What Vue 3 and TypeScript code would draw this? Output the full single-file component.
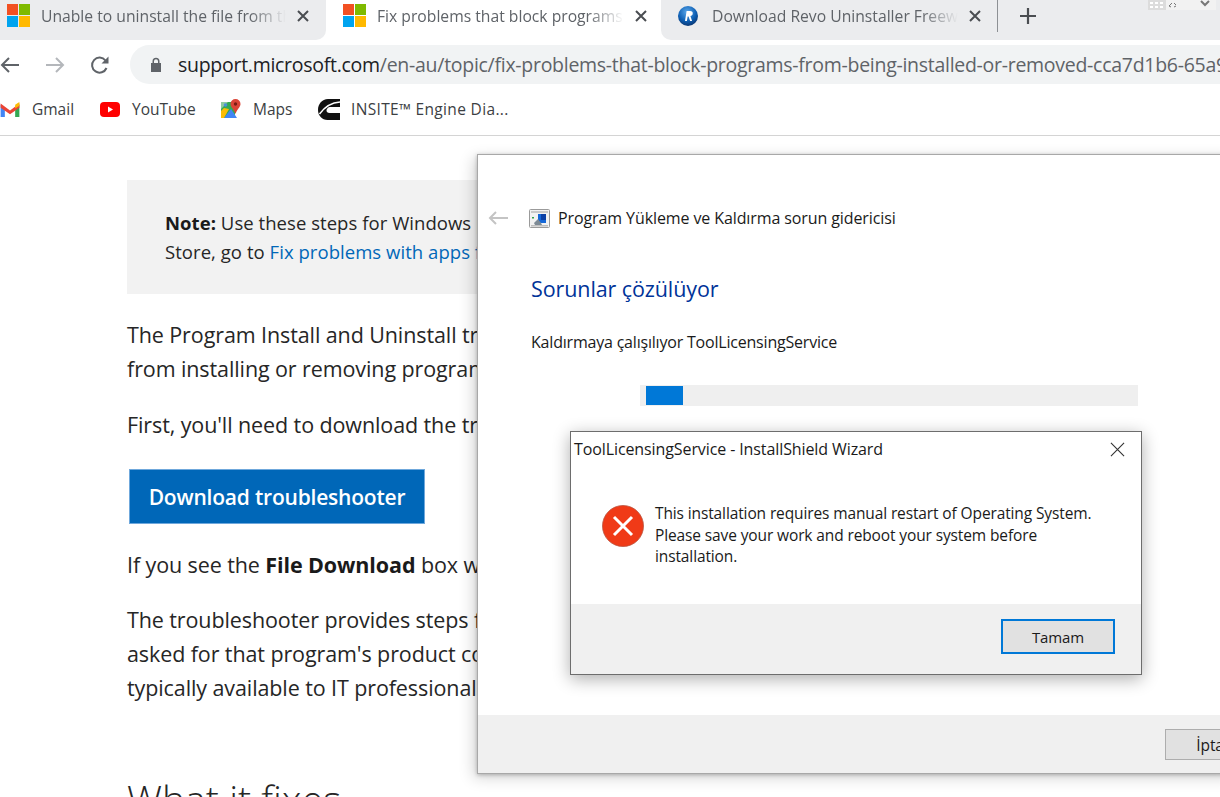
<script setup lang="ts">
const msColors: string[] = ['#f25022', '#7fba00', '#00a4ef', '#ffb900']
</script>

<template>
  <div class="screen">
    <header class="tabs">
      <div class="tab tab-first">
        <span class="ms"><i v-for="c in msColors" :key="c" :style="{ background: c }"></i></span>
        <span class="tab-title t1">Unable to uninstall the file from the</span>
        <svg class="x" viewBox="0 0 12 12"><path d="M1 1l10 10M11 1L1 11" /></svg>
      </div>
      <div class="tab tab-active">
        <span class="ms"><i v-for="c in msColors" :key="c" :style="{ background: c }"></i></span>
        <span class="tab-title t2">Fix problems that block programs from</span>
        <svg class="x" viewBox="0 0 12 12"><path d="M1 1l10 10M11 1L1 11" /></svg>
      </div>
      <div class="tab tab-last">
        <svg class="revo" viewBox="0 0 20 20">
          <defs>
            <radialGradient id="rv" cx="45%" cy="30%" r="75%">
              <stop offset="0" stop-color="#5aa7ea" />
              <stop offset="0.6" stop-color="#0d5fb4" />
              <stop offset="1" stop-color="#0a2f66" />
            </radialGradient>
          </defs>
          <circle cx="10" cy="10" r="10" fill="url(#rv)" />
          <path d="M7 15l1.6-10h3.4c2 0 3 1 2.7 2.7-.2 1.300-1 2.100-2.300 2.400l1.700 4.900h-2l-1.500-4.600h-1l-.7 4.600z" fill="#fff" />
        </svg>
        <span class="tab-title t3">Download Revo Uninstaller Freeware</span>
        <svg class="x x3" viewBox="0 0 12 12"><path d="M1 1l10 10M11 1L1 11" /></svg>
        <span class="sep"></span>
        <svg class="plus" viewBox="0 0 16 16"><path d="M8 0v16M0 8h16" /></svg>
        <div class="win-ctl">
          <svg width="18" height="10" viewBox="0 0 18 10"><rect width="18" height="10" fill="#dcdcdc" /><path d="M2 2h3v2H2zM7 2h3v2H7zM12 2h3v2h-3zM2 6h3v2H2zM7 6h3v2H7zM12 6h3v2h-3z" fill="#fff" /></svg>
          <svg width="28" height="10" viewBox="0 0 28 10"><rect width="28" height="10" fill="#f2f2f2" /><path d="M3 6l3-3M8 3l2 2M3 6l2 1M10 6l-2 1" stroke="#777" fill="none" /></svg>
          <svg width="22" height="10" viewBox="0 0 22 10"><rect width="22" height="10" fill="#f2f2f2" /><path d="M7 1l4 4 4-4" stroke="#777" stroke-width="2" fill="none" /></svg>
        </div>
      </div>
    </header>

    <div class="toolbar">
      <svg class="nav back" viewBox="0 0 20 18"><path d="M19 9H2M9 2L2 9l7 7" /></svg>
      <svg class="nav fwd" viewBox="0 0 20 18"><path d="M1 9h17M11 2l7 7-7 7" /></svg>
      <svg class="nav reload" viewBox="0 0 20 20"><path d="M16.500 13a7.500 7.500 0 1 1-1-7.500" /><path class="fill" d="M18.500 1.500v7h-7z" /></svg>
      <div class="omnibox">
        <svg class="lock" viewBox="0 0 12 15"><path d="M2.500 6V4.200a3.500 3.500 0 0 1 7 0V6h1.500v9H1V6zM4 6h4V4.200a2 2 0 0 0-4 0z" /></svg>
        <span class="url"><b>support.microsoft.com</b>/en-au/topic/fix-problems-that-block-programs-from-being-installed-or-removed-cca7d1b6-65a9-3d98-426b-e9f927e1eb4d</span>
      </div>
    </div>

    <nav class="bookmarks">
      <div class="bm bm-gmail">
        <svg class="bm-ico" viewBox="0 0 20 16">
          <path d="M0 3v13h4.500V7z" fill="#4285f4" />
          <path d="M20 3v13h-4.500V7z" fill="#34a853" />
          <path d="M0 1.500 10 9l10-7.500V6l-10 7L0 6z" fill="#ea4335" />
          <path d="M15.500 3 20 0v4l-4.500 3z" fill="#fbbc04" />
        </svg>
        <span>Gmail</span>
      </div>
      <div class="bm bm-yt">
        <svg class="bm-ico" viewBox="0 0 20 15"><rect width="20" height="15" rx="4" fill="#f00" /><path d="M8 4.500v6l5-3z" fill="#fff" /></svg>
        <span>YouTube</span>
      </div>
      <div class="bm bm-maps">
        <svg class="bm-ico tall" viewBox="0 0 20 20">
          <path d="M0 3h14v16H0z" fill="#34a853" />
          <path d="M3 19 10 10l6 9z" fill="#4285f4" />
          <path d="M0 19V12l3-3 5 1-5 9z" fill="#fbbc04" />
          <path d="M0 3h7L0 10z" fill="#8fc9a0" />
          <circle cx="4.500" cy="6" r="1.800" fill="#4a90d9" />
          <path d="M14.500 0a5 5 0 0 1 5 5c0 3.200-3.800 5.500-5 10-1.200-4.500-5-6.800-5-10a5 5 0 0 1 5-5z" fill="#db4437" />
          <circle cx="14.500" cy="5" r="1.700" fill="#7a1d14" />
        </svg>
        <span>Maps</span>
      </div>
      <div class="bm bm-ins">
        <svg class="bm-ico cum" viewBox="0 0 22 21">
          <path d="M22 0H10C4 0 0 5 0 11c0 5.500 4 10 9.500 10H22v-7H11.500C9.500 14 8.500 13 8.500 11.500S10 8 12 8h10z" fill="#111" />
          <path d="M22 3C13 3.500 7 7.500 1.500 15" stroke="#fff" stroke-width="1.600" fill="none" />
        </svg>
        <span>INSITE™ Engine Dia...</span>
      </div>
    </nav>

    <main class="page">
      <div class="note">
        <p><strong>Note:</strong> Use these steps for Windows programs. If you are having problems with apps from the Microsoft</p>
        <p>Store, go to <a>Fix problems with apps from Microsoft Store.</a></p>
      </div>
      <p class="body-p">The Program Install and Uninstall troubleshooter helps you automatically repair issues when you're blocked<br />from installing or removing programs. It also fixes corrupted registry keys.</p>
      <p class="body-p first">First, you'll need to download the troubleshooter.</p>
      <button class="dl">Download troubleshooter</button>
      <p class="body-p after">If you see the <strong>File Download</strong> box when you start downloading, select Run or Open.</p>
      <p class="body-p trouble">The troubleshooter provides steps for you to follow. If a program isn't listed in the uninstall options, you'll be<br />asked for that program's product code. To access the code, you'll need a tool for reading MSI files—which is<br />typically available to IT professionals.</p>
      <h2 class="fixes">What it fixes</h2>
    </main>

    <section class="wizard">
      <div class="wiz-body">
        <div class="wiz-head">
          <svg class="wiz-back" viewBox="0 0 20 14"><path d="M20 7H2M8 1 2 7l6 6" /></svg>
          <svg class="wiz-ico" viewBox="0 0 21 19">
            <rect x=".5" y=".5" width="20" height="18" rx="1" fill="#f2f2f2" stroke="#9a9a9a" />
            <path d="M2 2h17v2H2z" fill="#c9c9c9" />
            <path d="M9 5h8v9H9z" fill="#1668d8" />
            <path d="M12 5h5v6h-5z" fill="#0a3fa5" />
            <path d="M2 16h17v1.500H2z" fill="#bdbdbd" />
            <path d="M5 14l4-4 3 4 1 2H6z" fill="#7d8a95" />
            <path d="M3 8h2v1.500H3z" fill="#35a04a" />
          </svg>
          <span class="wiz-title">Program Yükleme ve Kaldırma sorun gidericisi</span>
        </div>
        <h1 class="wiz-h">Sorunlar çözülüyor</h1>
        <p class="wiz-status">Kaldırmaya çalışılıyor ToolLicensingService</p>
        <div class="track"><div class="fill-bar"></div></div>
      </div>
      <footer class="wiz-foot"><button class="cancel">İptal</button></footer>
    </section>

    <section class="dialog">
      <div class="dlg-title">
        <span>ToolLicensingService - InstallShield Wizard</span>
        <svg class="dlg-x" viewBox="0 0 16 16"><path d="M1 1l14 14M15 1 1 15" /></svg>
      </div>
      <div class="dlg-body">
        <svg class="err" viewBox="0 0 42 42">
          <circle cx="21" cy="21" r="20.500" fill="#f03a17" stroke="#b9533f" stroke-width=".8" />
          <path d="M12 12l18 18M30 12 12 30" stroke="#fff" stroke-width="3" fill="none" />
        </svg>
        <p>This installation requires manual restart of Operating System.<br />Please save your work and reboot your system before<br />installation.</p>
      </div>
      <div class="dlg-foot"><button class="ok">Tamam</button></div>
    </section>
  </div>
</template>

<style>
html, body { margin: 0; padding: 0; background: #fff; overflow: hidden; }
</style>

<style scoped>
.screen {
  position: relative;
  width: 1220px;
  height: 797px;
  overflow: hidden;
  background: #fff;
  font-family: "Open Sans", "Liberation Sans", sans-serif;
  color: #1f1f1f;
}
p, h1, h2 { margin: 0; font-weight: 400; }

/* tabs */
.tabs { display: flex; height: 40px; }
.tab { display: flex; align-items: center; height: 40px; box-sizing: border-box; font-size: 15.700px; color: #5f6368; padding-bottom: 9px; }
.tab-first { width: 326px; background: #ebecee; border-bottom-right-radius: 10px; padding-left: 7px; }
.tab-active { width: 335px; background: #fff; padding-left: 17px; }
.tab-last { flex: 1; background: #ebecee; border-bottom-left-radius: 10px; padding-left: 17px; position: relative; }
.ms { display: grid; grid-template-columns: 11px 11px; grid-auto-rows: 11px; gap: 1px; width: 23px; flex: none; }
.ms i { display: block; }
.tab-title { margin-left: 11px; white-space: nowrap; overflow: hidden; letter-spacing: 0; -webkit-mask-image: linear-gradient(to right, #000 85%, transparent); mask-image: linear-gradient(to right, #000 85%, transparent); }
.t1 { width: 245px; }
.t2 { width: 247px; }
.t3 { width: 246px; margin-left: 14px; }
.x { width: 12px; height: 12px; flex: none; margin-left: 11px; fill: none; stroke: #4a4d51; stroke-width: 2; }
.x3 { margin-left: 11px; }
.revo { width: 20px; height: 20px; flex: none; }
.sep { width: 1px; height: 32px; background: #8d9094; margin-left: 16px; flex: none; }
.plus { width: 16px; height: 16px; margin-left: 22px; fill: none; stroke: #4a4d51; stroke-width: 2.200; flex: none; }
.win-ctl { position: absolute; top: 0; left: 487px; display: flex; }

/* toolbar */
.toolbar { display: flex; align-items: center; height: 50px; padding: 5px 0 6px; box-sizing: border-box; }
.nav { flex: none; fill: none; stroke: #5f6368; stroke-width: 2; }
.nav .fill { fill: #5f6368; stroke: none; }
.back { width: 20px; height: 18px; }
.fwd { width: 20px; height: 18px; margin-left: 25px; stroke: #b4b7bb; }
.reload { width: 20px; height: 20px; margin-left: 25px; }
.omnibox { flex: 1; display: flex; align-items: center; height: 39px; margin-left: 20px; background: #f1f3f4; border-radius: 20px 0 0 20px; padding-left: 20px; overflow: hidden; }
.lock { width: 12px; height: 15px; fill: #5f6368; flex: none; }
.url { margin-left: 16px; font-size: 19.500px; white-space: nowrap; color: #5f6368; letter-spacing: -0.28px; }
.url b { font-weight: 400; color: #202124; }

/* bookmarks */
.bookmarks { display: flex; align-items: center; height: 46px; box-sizing: border-box; padding-bottom: 7px; border-bottom: 1px solid #d4d4d4; font-size: 15.500px; color: #3c4043; }
.bm { display: flex; align-items: center; white-space: nowrap; }
.bm-ico { width: 20px; height: 15px; flex: none; margin-right: 12px; }
.tall { height: 20px; }
.cum { width: 22px; height: 21px; margin-right: 11px; }
.bm-gmail { width: 100px; }
.bm-yt { width: 121px; }
.bm-maps { width: 97px; }
.bm-ins { letter-spacing: 0.34px; }

/* page */
.page { padding: 44px 0 0 127px; font-size: 21.500px; line-height: 34px; color: #262626; white-space: nowrap; letter-spacing: -0.1px; }
.note { width: 1000px; height: 114px; box-sizing: border-box; padding: 28px 0 0 38px; background: #f2f2f2; font-size: 18.500px; line-height: 29px; letter-spacing: 0.05px; }
.note a { color: #0067b8; }
.note strong, .after strong { font-weight: 700; color: #1a1a1a; }
.body-p { margin-top: 24px; }
.body-p.first { margin-top: 22px; }
.dl { display: block; width: 296px; height: 55px; margin: 27px 0 0 2px; border: 1px solid #6fa8dc; background: #0067b8; color: #fff; font: 600 21px "Open Sans", sans-serif; letter-spacing: -0.2px; padding: 0; }
.body-p.after { margin-top: 24px; }
.body-p.trouble { margin-top: 21px; }
.fixes { margin-top: 66px; font-size: 39.200px; font-weight: 300; line-height: 56px; color: #262626; letter-spacing: 0; }

/* wizard window */
.wizard {
  position: absolute; left: 477px; top: 154px; width: 760px; height: 620px; box-sizing: border-box;
  display: flex; flex-direction: column; background: #fff; border: 1px solid #a8a8a8;
  box-shadow: -4px 4px 14px rgba(0, 0, 0, .16), 0 1px 4px rgba(0, 0, 0, .25);
}
.wiz-body { flex: 1; padding: 53px 0 0 53px; }
.wiz-head { display: flex; align-items: center; height: 20px; margin-left: -43px; }
.wiz-back { width: 20px; height: 14px; fill: none; stroke: #c4c4c4; stroke-width: 2; flex: none; }
.wiz-ico { width: 21px; height: 19px; margin-left: 21px; flex: none; }
.wiz-title { margin-left: 8px; font-size: 16px; color: #1a1a1a; white-space: nowrap; letter-spacing: -0.1px; }
.wiz-h { margin-top: 46px; font-size: 21.500px; line-height: 30px; color: #003399; letter-spacing: -0.1px; }
.wiz-status { margin-top: 27px; font-size: 16px; line-height: 22px; color: #1a1a1a; letter-spacing: -0.2px; }
.track { width: 498px; height: 21px; margin: 32px 0 0 109px; padding: 1px 0 0 6px; box-sizing: border-box; background: #efefef; }
.fill-bar { width: 37px; height: 19px; background: #0078d7; }
.wiz-foot { height: 58px; background: #f0f0f0; box-sizing: border-box; padding: 14px 0 0 687px; flex: none; }
.cancel { width: 94px; height: 31px; background: #e1e1e1; border: 1px solid #adadad; font: 15.500px "Open Sans", sans-serif; color: #1a1a1a; padding: 0; letter-spacing: -0.1px; }

/* dialog */
.dialog {
  position: absolute; left: 570px; top: 431px; width: 572px; height: 244px; box-sizing: border-box;
  display: flex; flex-direction: column; background: #fff; border: 1px solid #6d6d6d;
  box-shadow: 0 4px 16px rgba(0, 0, 0, .32);
}
.dlg-title { display: flex; align-items: center; justify-content: space-between; height: 34px; padding: 0 16px 0 3px; font-size: 16px; color: #1a1a1a; letter-spacing: -0.1px; flex: none; }
.dlg-x { width: 15px; height: 15px; fill: none; stroke: #333; stroke-width: 1.200; flex: none; }
.dlg-body { flex: 1; display: flex; padding: 36px 0 0 31px; align-items: flex-start; }
.err { width: 42px; height: 42px; flex: none; margin-top: 3px; }
.dlg-body p { margin-left: 11px; margin-top: 1px; font-size: 15.500px; line-height: 21.500px; color: #1a1a1a; white-space: nowrap; letter-spacing: -0.12px; }
.dlg-foot { height: 70px; background: #f0f0f0; box-sizing: border-box; display: flex; justify-content: flex-end; padding: 15px 26px 0 0; flex: none; }
.ok { width: 114px; height: 35px; background: #e1e1e1; border: 2px solid #0078d7; font: 15px "Open Sans", sans-serif; color: #1a1a1a; padding: 0; letter-spacing: -0.1px; }
</style>
